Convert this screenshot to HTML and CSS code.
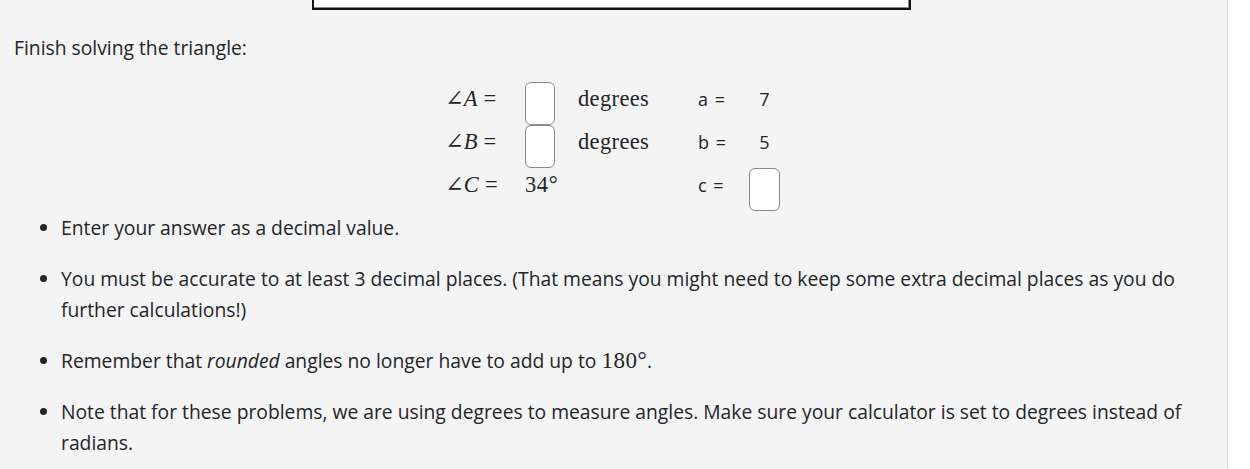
FILE: index.html
```html
<!DOCTYPE html>
<html>
<head>
<meta charset="utf-8">
<link rel="stylesheet" href="styles.css">
</head>
<body>
<div class="page">
  <main class="content">
    <div class="canvas-wrap"><div class="canvas"></div></div>
    <p class="intro">Finish solving the triangle:</p>
    <div class="solve">
      <div class="lbl math"><span class="ang">∠</span><i>A</i><span class="eq">=</span></div>
      <div class="cell"><span class="box"></span></div>
      <div class="unit math">degrees</div>
      <div class="side">a =</div>
      <div class="val">7</div>

      <div class="lbl math"><span class="ang">∠</span><i>B</i><span class="eq">=</span></div>
      <div class="cell"><span class="box"></span></div>
      <div class="unit math">degrees</div>
      <div class="side">b =</div>
      <div class="val">5</div>

      <div class="lbl math"><span class="ang">∠</span><i>C</i><span class="eq">=</span></div>
      <div class="given math">34°</div>
      <div class="unit"></div>
      <div class="side">c =</div>
      <div class="cell"><span class="box wide"></span></div>
    </div>
    <ul class="notes">
      <li>Enter your answer as a decimal value.</li>
      <li>You must be accurate to at least 3 decimal places. (That means you might need to keep some extra decimal places as you do further calculations!)</li>
      <li>Remember that <em>rounded</em> angles no longer have to add up to <span class="math num">180°</span>.</li>
      <li>Note that for these problems, we are using degrees to measure angles. Make sure your calculator is set to degrees instead of radians.</li>
    </ul>
  </main>
  <aside class="side-pane"></aside>
</div>
</body>
</html>
```
FILE: styles.css
```css
html, body {
  margin: 0;
  padding: 0;
  background: #f4f4f4;
}
body {
  font-family: "Open Sans", "Noto Sans", sans-serif;
  font-size: 19.3px;
  color: #212529;
}
.page {
  display: flex;
  height: 469px;
  overflow: hidden;
}
.content {
  width: 1228px;
  box-sizing: border-box;
  padding: 0 14px;
  background: #f4f4f4;
  border-right: 1px solid #dcdcdc;
}
.side-pane {
  flex: 1;
  background: #ffffff;
}
.canvas-wrap {
  padding-left: 298px;
}
.canvas {
  width: 595px;
  height: 8px;
  background: #fff;
  border: 2px solid #111;
  border-top: none;
  box-shadow: inset -1px -1px 0 #888;
}
.intro {
  margin: 25px 0 0;
  line-height: 26px;
}
.math {
  font-family: "Liberation Serif", "DejaVu Serif", serif;
  font-size: 22.5px;
}
.solve {
  display: grid;
  grid-template-columns: 80px 53px 120px 51px 31px;
  grid-auto-rows: 43px;
  margin: 21px 0 0 431px;
  align-items: center;
}
.lbl, .unit, .side, .val, .given {
  padding-bottom: 10px;
}
.lbl i { font-style: italic; }
.ang { font-style: normal; }
.eq { margin-left: 6px; }
.unit { letter-spacing: 0.35px; }
.given { letter-spacing: 0.6px; }
.box {
  display: block;
  width: 30px;
  height: 43px;
  box-sizing: border-box;
  border: 1px solid #8a8a8a;
  border-radius: 6px;
  background: #fff;
}
.box.wide { width: 31px; }
.side {
  font-size: 18px;
  word-spacing: 2px;
}
.val {
  font-size: 18px;
  text-align: center;
}
.notes {
  margin: 1px 0 0;
  padding-left: 47px;
}
.notes li {
  line-height: 31px;
  margin-bottom: 20px;
}
.notes em { font-style: italic; }
.num { font-size: 23px; letter-spacing: 0.5px; }
```
